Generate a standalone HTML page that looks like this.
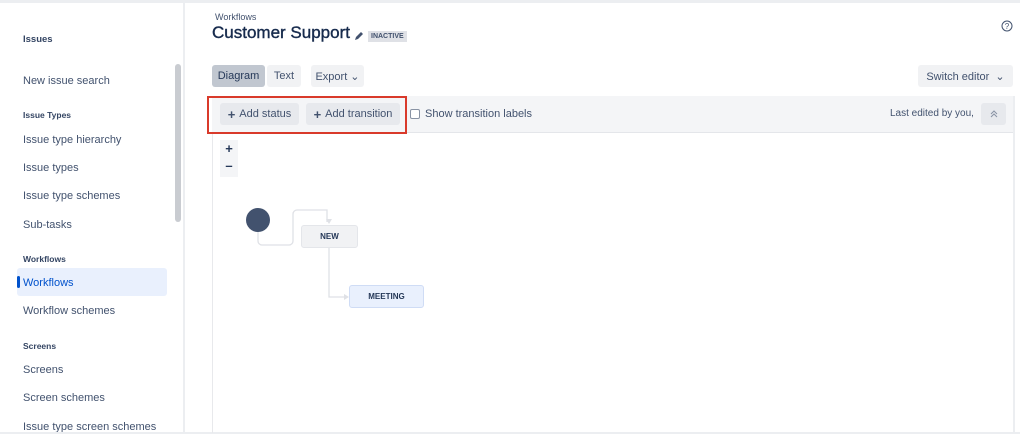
<!DOCTYPE html>
<html><head><meta charset="utf-8"><style>
*{box-sizing:border-box;margin:0;padding:0}
body{width:1020px;height:434px;overflow:hidden;background:#fff;font-family:"Liberation Sans",sans-serif;color:#42526e;position:relative}
.a{position:absolute}
.sb{font-size:11px;color:#42526e;left:23px}
.h{font-size:8.5px;font-weight:bold;color:#344563;left:23px}
.btn{position:absolute;background:#f1f2f4;border-radius:3px;font-size:11px;color:#42526e;display:flex;align-items:center;justify-content:center}
</style></head><body>
<div class="a" style="left:0;top:0;width:1020px;height:3px;background:#eceef1"></div>
<div class="a" style="left:183px;top:3px;width:2px;height:431px;background:#eceef1"></div>
<div class="a" style="left:175px;top:64px;width:6px;height:158px;background:#c9ccd1;border-radius:3px"></div>
<div class="a h" style="top:34px;font-size:9.5px">Issues</div>
<div class="a sb" style="top:75px">New issue search</div>
<div class="a h" style="top:110px">Issue Types</div>
<div class="a sb" style="top:134px">Issue type hierarchy</div>
<div class="a sb" style="top:162px">Issue types</div>
<div class="a sb" style="top:190px">Issue type schemes</div>
<div class="a sb" style="top:219px">Sub-tasks</div>
<div class="a h" style="top:254px">Workflows</div>
<div class="a" style="left:17px;top:268px;width:150px;height:28px;background:#e9f0fd;border-radius:3px"></div>
<div class="a" style="left:17px;top:276px;width:3px;height:12px;background:#0052cc;border-radius:2px"></div>
<div class="a sb" style="top:277px;color:#0052cc">Workflows</div>
<div class="a sb" style="top:305px">Workflow schemes</div>
<div class="a h" style="top:341px">Screens</div>
<div class="a sb" style="top:364px">Screens</div>
<div class="a sb" style="top:392px">Screen schemes</div>
<div class="a sb" style="top:421px">Issue type screen schemes</div>
<div class="a" style="left:0;top:432px;width:1020px;height:2px;background:#eceef1"></div>

<div class="a" style="left:215px;top:12px;font-size:9px;color:#42526e">Workflows</div>
<div class="a" style="left:212px;top:23px;font-size:17px;color:#172b4d;-webkit-text-stroke:0.4px #172b4d">Customer Support</div>
<svg class="a" style="left:354px;top:31px" width="10" height="10" viewBox="0 0 10 10"><path d="M1 9l1-3 5-5 2 2-5 5z" fill="#42526e"/></svg>
<div class="a" style="left:368px;top:31px;background:#dfe1e6;font-size:7px;font-weight:bold;color:#42526e;padding:2px 3px">INACTIVE</div>
<svg class="a" style="left:1001px;top:20px" width="12" height="12" viewBox="0 0 12 12"><circle cx="6" cy="6" r="5" fill="none" stroke="#42526e" stroke-width="1"/><text x="6" y="9" font-size="8" text-anchor="middle" fill="#42526e" font-family="Liberation Sans">?</text></svg>

<div class="btn" style="left:212px;top:65px;width:53px;height:22px;background:#c1c7d0;color:#253858">Diagram</div>
<div class="btn" style="left:267px;top:65px;width:34px;height:22px">Text</div>
<div class="btn" style="left:311px;top:65px;width:53px;height:22px">Export ⌄</div>
<div class="btn" style="left:918px;top:65px;width:95px;height:22px">Switch editor &nbsp;⌄</div>

<div class="a" style="left:212px;top:96px;width:802px;height:37px;background:#f4f5f7;border-bottom:1px solid #e4e6ea"></div>
<div class="a" style="left:212px;top:133px;width:1px;height:300px;background:#e8e9ec"></div>
<div class="a" style="left:1013px;top:96px;width:2px;height:337px;background:#eceef1"></div>
<div class="btn" style="left:220px;top:103px;width:79px;height:22px;background:#e7e9ed"><b style="font-size:13px;margin-right:4px">+</b>Add status</div>
<div class="btn" style="left:306px;top:103px;width:94px;height:22px;background:#e7e9ed"><b style="font-size:13px;margin-right:4px">+</b>Add transition</div>
<div class="a" style="left:207px;top:96px;width:200px;height:38px;border:2px solid #d93a2b"></div>
<div class="a" style="left:410px;top:109px;width:10px;height:10px;border:1px solid #8993a4;border-radius:2px;background:#fff"></div>
<div class="a" style="left:425px;top:108px;font-size:11px">Show transition labels</div>
<div class="a" style="left:890px;top:108px;font-size:10px">Last edited by you,</div>
<div class="btn" style="left:981px;top:103px;width:25px;height:22px;background:#e7e9ed"><svg width="8" height="8" viewBox="0 0 8 8"><path d="M1 4l3-3 3 3M1 7l3-3 3 3" fill="none" stroke="#8993a4" stroke-width="1"/></svg></div>

<div class="a" style="left:220px;top:140px;width:18px;height:37px;background:#f4f5f7;font-size:13px;font-weight:bold;color:#253858;text-align:center;line-height:17px">+<br>–</div>
<svg class="a" style="left:240px;top:200px" width="200" height="115">
<path d="M18 28v13a4 4 0 0 0 4 4h27a4 4 0 0 0 4-4V14a4 4 0 0 1 4-4h30v12" fill="none" stroke="#dfe1e6" stroke-width="1.3"/>
<path d="M86 19l3 5 3-5z" fill="#dfe1e6"/>
<path d="M89 47v50h17" fill="none" stroke="#dfe1e6" stroke-width="1.3"/>
<path d="M104 94l5 3-5 3z" fill="#dfe1e6"/>
<circle cx="18" cy="20" r="12" fill="#42526e"/>
</svg>
<div class="a" style="left:301px;top:225px;width:57px;height:23px;background:#f1f2f4;border:1px solid #e4e6ea;border-radius:3px;font-size:8px;font-weight:bold;color:#253858;text-align:center;line-height:21px">NEW</div>
<div class="a" style="left:349px;top:285px;width:75px;height:23px;background:#e9f0fd;border:1px solid #cfdcf5;border-radius:3px;font-size:8px;font-weight:bold;color:#253858;text-align:center;line-height:21px">MEETING</div>
</body></html>
